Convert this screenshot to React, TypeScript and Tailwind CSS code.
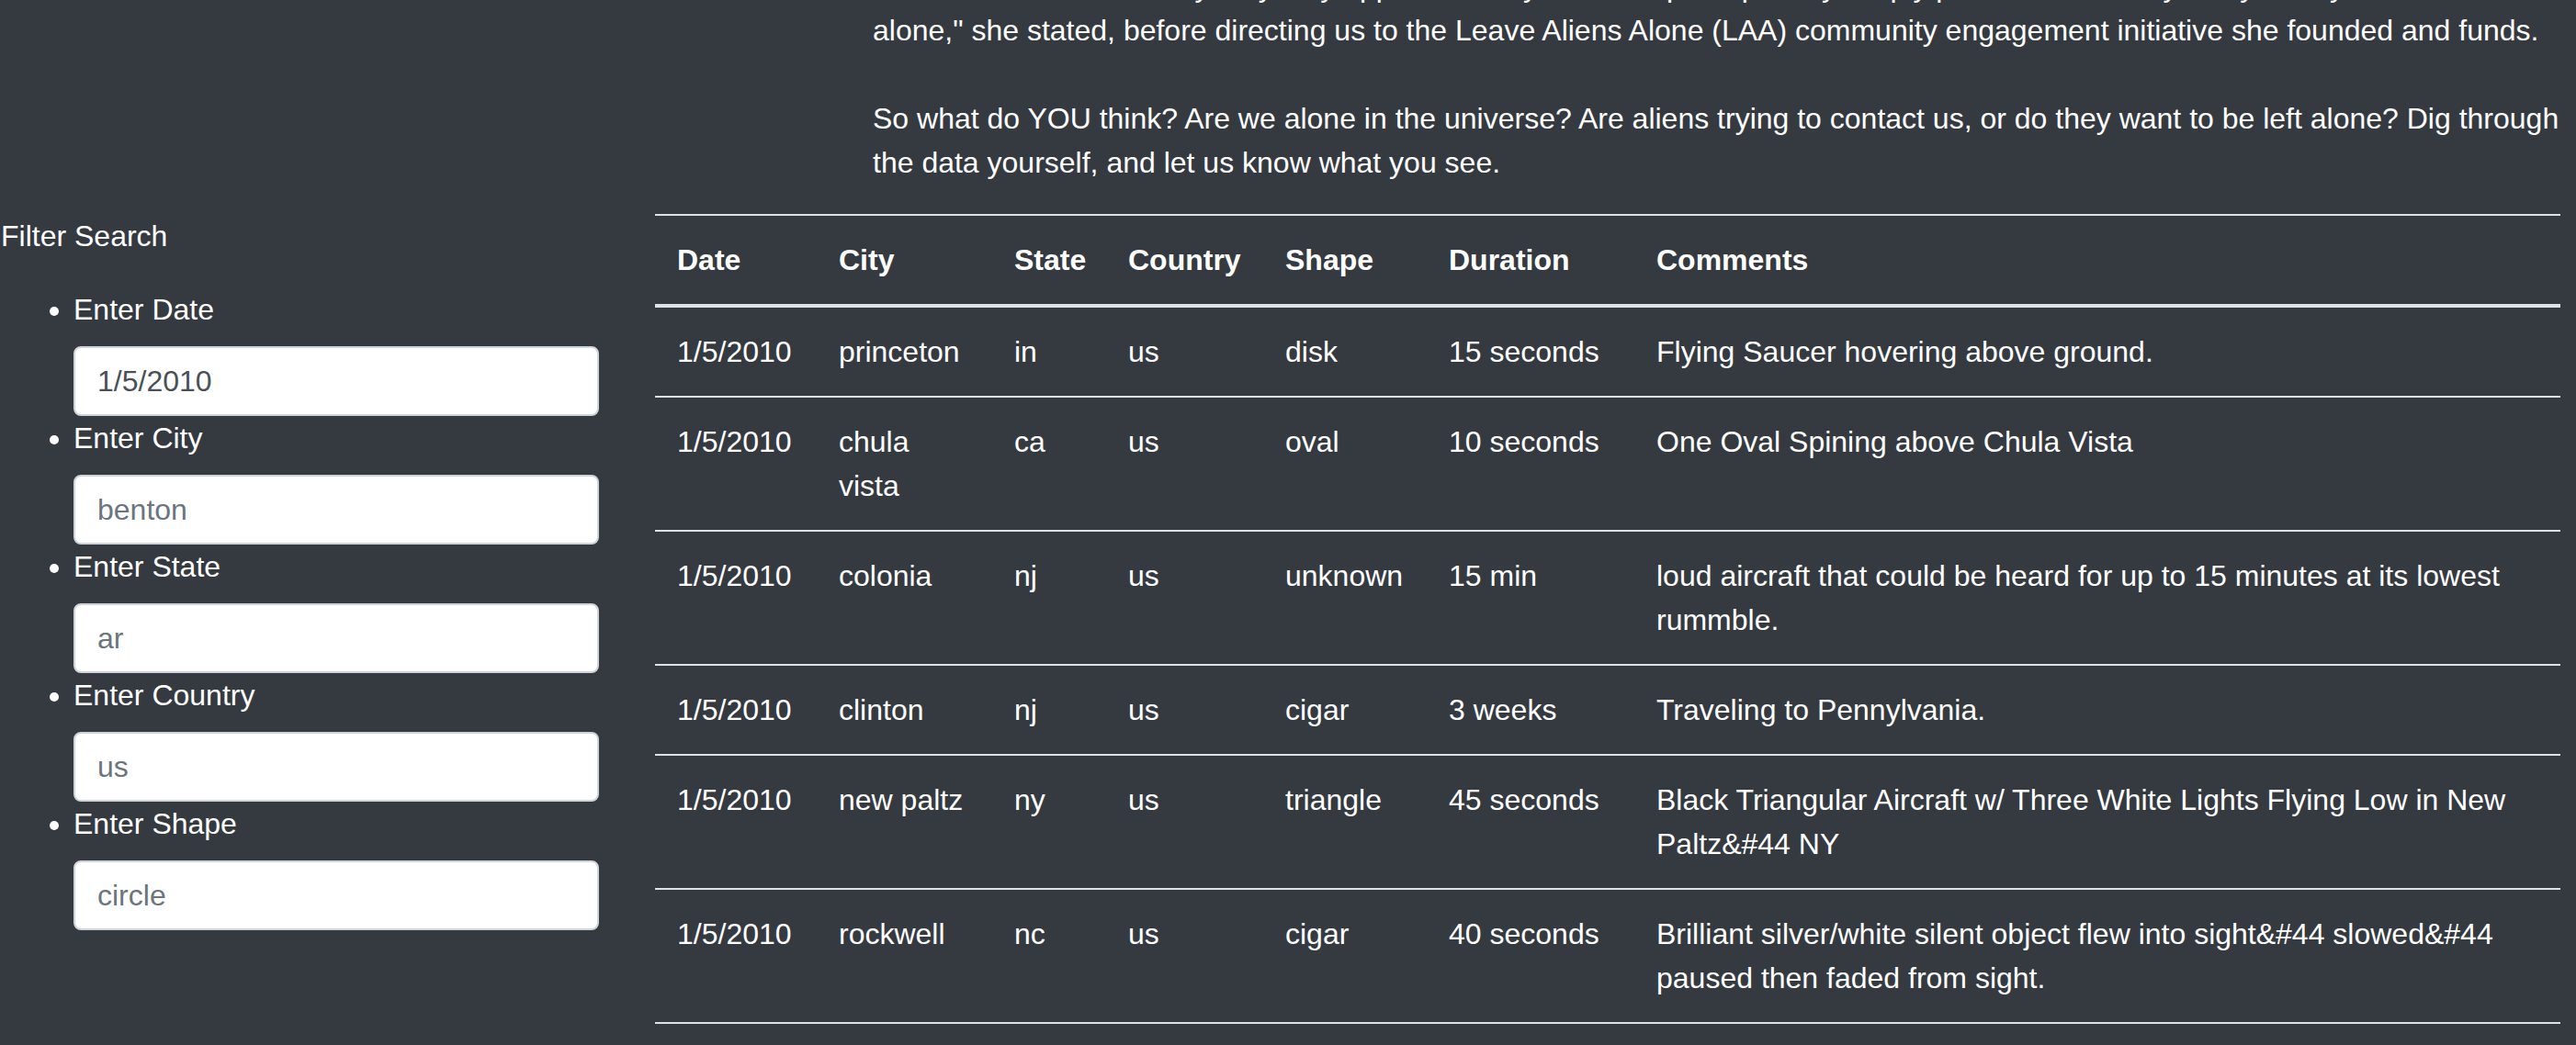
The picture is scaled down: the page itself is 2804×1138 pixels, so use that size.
import React from "react";

type Row = {
  date: string;
  city: React.ReactNode;
  state: string;
  country: string;
  shape: string;
  duration: string;
  comments: React.ReactNode;
};

const rows: Row[] = [
  {
    date: "1/5/2010",
    city: "princeton",
    state: "in",
    country: "us",
    shape: "disk",
    duration: "15 seconds",
    comments: "Flying Saucer hovering above ground.",
  },
  {
    date: "1/5/2010",
    city: (
      <>
        chula
        <br />
        vista
      </>
    ),
    state: "ca",
    country: "us",
    shape: "oval",
    duration: "10 seconds",
    comments: "One Oval Spining above Chula Vista",
  },
  {
    date: "1/5/2010",
    city: "colonia",
    state: "nj",
    country: "us",
    shape: "unknown",
    duration: "15 min",
    comments: (
      <>
        loud aircraft that could be heard for up to 15 minutes at its lowest
        <br />
        rummble.
      </>
    ),
  },
  {
    date: "1/5/2010",
    city: "clinton",
    state: "nj",
    country: "us",
    shape: "cigar",
    duration: "3 weeks",
    comments: "Traveling to Pennylvania.",
  },
  {
    date: "1/5/2010",
    city: "new paltz",
    state: "ny",
    country: "us",
    shape: "triangle",
    duration: "45 seconds",
    comments: (
      <>
        Black Triangular Aircraft w/ Three White Lights Flying Low in New
        <br />
        Paltz&amp;#44 NY
      </>
    ),
  },
  {
    date: "1/5/2010",
    city: "rockwell",
    state: "nc",
    country: "us",
    shape: "cigar",
    duration: "40 seconds",
    comments: (
      <>
        Brilliant silver/white silent object flew into sight&amp;#44 slowed&amp;#44
        <br />
        paused then faded from sight.
      </>
    ),
  },
];

const filters = [
  { label: "Enter Date", value: "1/5/2010", placeholder: "1/5/2010" },
  { label: "Enter City", value: "", placeholder: "benton" },
  { label: "Enter State", value: "", placeholder: "ar" },
  { label: "Enter Country", value: "", placeholder: "us" },
  { label: "Enter Shape", value: "", placeholder: "circle" },
];

const th =
  "text-left align-top font-bold px-[24px] py-[24px] leading-[48px] border-t-2 border-b-4 border-[#dee2e6] whitespace-nowrap";
const td =
  "text-left align-top font-normal px-[24px] py-[24px] leading-[48px] border-t-2 border-b-2 border-[#dee2e6]";

export default function App() {
  return (
    <div
      className="w-[2804px] h-[1138px] overflow-hidden bg-[#343a40] text-white text-[32px] leading-[48px]"
      style={{ fontFamily: '"Liberation Sans", Arial, sans-serif' }}
    >
      <div className="ml-[950px] mt-[-39px] w-[1837px]">
        <p className="mb-[48px] whitespace-nowrap">
          Still, she warned that they may only appear friendly, and that perhaps they simply prefer that we stay away. "They want to be left
          <br />
          alone," she stated, before directing us to the Leave Aliens Alone (LAA) community engagement initiative she founded and funds.
        </p>
        <p className="mb-[32px] whitespace-nowrap">
          So what do YOU think? Are we alone in the universe? Are aliens trying to contact us, or do they want to be left alone? Dig through
          <br />
          the data yourself, and let us know what you see.
        </p>
      </div>

      <div className="flex">
        <div className="w-[713px] shrink-0 pl-[1px]">
          <div className="mb-[32px]">Filter Search</div>
          <ul className="list-disc pl-[79px]">
            {filters.map((f) => (
              <li key={f.label}>
                <label className="inline-block mb-[16px]">{f.label}</label>
                <input
                  type="text"
                  defaultValue={f.value}
                  placeholder={f.placeholder}
                  className="block w-[572px] h-[76px] rounded-[8px] border-2 border-[#ced4da] bg-white px-[24px] py-[12px] text-[32px] leading-[48px] text-[#495057] placeholder:text-[#6c757d] outline-none"
                  style={{ fontFamily: '"Liberation Sans", Arial, sans-serif' }}
                />
              </li>
            ))}
          </ul>
        </div>

        <table className="w-[2074px] table-fixed border-collapse shrink-0">
          <colgroup>
            <col className="w-[176px]" />
            <col className="w-[191px]" />
            <col className="w-[124px]" />
            <col className="w-[171px]" />
            <col className="w-[178px]" />
            <col className="w-[226px]" />
            <col className="w-[1008px]" />
          </colgroup>
          <thead>
            <tr>
              <th className={th}>Date</th>
              <th className={th}>City</th>
              <th className={th}>State</th>
              <th className={th}>Country</th>
              <th className={th}>Shape</th>
              <th className={th}>Duration</th>
              <th className={th}>Comments</th>
            </tr>
          </thead>
          <tbody>
            {rows.map((r, i) => (
              <tr key={i}>
                <td className={`${td} whitespace-nowrap`}>{r.date}</td>
                <td className={td}>{r.city}</td>
                <td className={`${td} whitespace-nowrap`}>{r.state}</td>
                <td className={`${td} whitespace-nowrap`}>{r.country}</td>
                <td className={`${td} whitespace-nowrap`}>{r.shape}</td>
                <td className={`${td} whitespace-nowrap`}>{r.duration}</td>
                <td className={td}>{r.comments}</td>
              </tr>
            ))}
          </tbody>
        </table>
      </div>
    </div>
  );
}
